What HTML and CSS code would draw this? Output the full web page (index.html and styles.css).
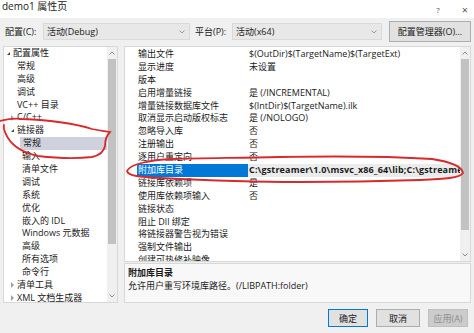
FILE: index.html
```html
<!DOCTYPE html>
<html lang="zh-CN">
  <head>
    <meta charset="UTF-8" />
    <meta name="viewport" content="width=device-width, initial-scale=1.0" />
    <title>demo1 属性页</title>
    <link rel="stylesheet" href="styles.css">
  </head>
  <body>
    <div class="dialog">
      <div class="titlebar">
        <span class="title">demo1 属性页</span>
        <span class="caption-btns">
          <span class="cap-help">?</span>
          <span class="cap-close">×</span>
        </span>
      </div>

      <div class="config-row">
        <span class="label label-config">配置(C):</span>
        <div class="combo combo-config">
          <span>活动(Debug)</span>
          <svg class="chev" width="6" height="4" viewBox="0 0 6 4"><path d="M0.5 0.5 L3 3 L5.5 0.5" fill="none" stroke="#9a9a9a" stroke-width="1"/></svg>
        </div>
        <span class="label label-platform">平台(P):</span>
        <div class="combo combo-platform">
          <span>活动(x64)</span>
          <svg class="chev" width="6" height="4" viewBox="0 0 6 4"><path d="M0.5 0.5 L3 3 L5.5 0.5" fill="none" stroke="#9a9a9a" stroke-width="1"/></svg>
        </div>
        <button class="btn btn-manager">配置管理器(O)...</button>
      </div>

      <div class="main">
        <!-- 左侧属性树 -->
        <div class="tree-panel">
          <div class="tree">
            <div class="tree-row lvl0"><span class="twist"><span class="tri-open"></span></span><span class="label">配置属性</span></div>
            <div class="tree-row lvl1"><span class="twist"></span><span class="label">常规</span></div>
            <div class="tree-row lvl1"><span class="twist"></span><span class="label">高级</span></div>
            <div class="tree-row lvl1"><span class="twist"></span><span class="label">调试</span></div>
            <div class="tree-row lvl1"><span class="twist"></span><span class="label">VC++ 目录</span></div>
            <div class="tree-row lvl1"><span class="twist"><span class="tri-closed"></span></span><span class="label">C/C++</span></div>
            <div class="tree-row lvl1"><span class="twist"><span class="tri-open"></span></span><span class="label">链接器</span></div>
            <div class="tree-row lvl2 selected"><span class="twist"></span><span class="label">常规</span></div>
            <div class="tree-row lvl2"><span class="twist"></span><span class="label">输入</span></div>
            <div class="tree-row lvl2"><span class="twist"></span><span class="label">清单文件</span></div>
            <div class="tree-row lvl2"><span class="twist"></span><span class="label">调试</span></div>
            <div class="tree-row lvl2"><span class="twist"></span><span class="label">系统</span></div>
            <div class="tree-row lvl2"><span class="twist"></span><span class="label">优化</span></div>
            <div class="tree-row lvl2"><span class="twist"></span><span class="label">嵌入的 IDL</span></div>
            <div class="tree-row lvl2"><span class="twist"></span><span class="label">Windows 元数据</span></div>
            <div class="tree-row lvl2"><span class="twist"></span><span class="label">高级</span></div>
            <div class="tree-row lvl2"><span class="twist"></span><span class="label">所有选项</span></div>
            <div class="tree-row lvl2"><span class="twist"></span><span class="label">命令行</span></div>
            <div class="tree-row lvl1"><span class="twist"><span class="tri-closed"></span></span><span class="label">清单工具</span></div>
            <div class="tree-row lvl1"><span class="twist"><span class="tri-closed"></span></span><span class="label">XML 文档生成器</span></div>
          </div>
          <div class="scrollbar scrollbar-tree">
            <svg class="sb-arrow" width="6" height="4" viewBox="0 0 6 4"><path d="M0.5 3.5 L3 1 L5.5 3.5" fill="none" stroke="#8a8a8a" stroke-width="1"/></svg>
            <div class="sb-track"><div class="sb-thumb thumb-tree"></div></div>
            <svg class="sb-arrow" width="6" height="4" viewBox="0 0 6 4"><path d="M0.5 0.5 L3 3 L5.5 0.5" fill="none" stroke="#8a8a8a" stroke-width="1"/></svg>
          </div>
        </div>

        <!-- 右侧属性表 -->
        <div class="right-panel">
          <div class="grid-panel">
            <div class="props">
              <div class="prop"><span class="name">输出文件</span><span class="value">$(OutDir)$(TargetName)$(TargetExt)</span></div>
              <div class="prop"><span class="name">显示进度</span><span class="value">未设置</span></div>
              <div class="prop"><span class="name">版本</span><span class="value"></span></div>
              <div class="prop"><span class="name">启用增量链接</span><span class="value">是 (/INCREMENTAL)</span></div>
              <div class="prop"><span class="name">增量链接数据库文件</span><span class="value">$(IntDir)$(TargetName).ilk</span></div>
              <div class="prop"><span class="name">取消显示启动版权标志</span><span class="value">是 (/NOLOGO)</span></div>
              <div class="prop"><span class="name">忽略导入库</span><span class="value">否</span></div>
              <div class="prop"><span class="name">注册输出</span><span class="value">否</span></div>
              <div class="prop"><span class="name">逐用户重定向</span><span class="value">否</span></div>
              <div class="prop active"><span class="name">附加库目录</span><span class="value">C:\gstreamer\1.0\msvc_x86_64\lib;C:\gstreamer\1.0\msvc_x86_64\lib\gstreamer-1.0</span></div>
              <div class="prop"><span class="name">链接库依赖项</span><span class="value">是</span></div>
              <div class="prop"><span class="name">使用库依赖项输入</span><span class="value">否</span></div>
              <div class="prop"><span class="name">链接状态</span><span class="value"></span></div>
              <div class="prop"><span class="name">阻止 Dll 绑定</span><span class="value"></span></div>
              <div class="prop"><span class="name">将链接器警告视为错误</span><span class="value"></span></div>
              <div class="prop"><span class="name">强制文件输出</span><span class="value"></span></div>
              <div class="prop"><span class="name">创建可热修补映像</span><span class="value"></span></div>
            </div>
            <div class="scrollbar scrollbar-grid">
              <svg class="sb-arrow" width="6" height="4" viewBox="0 0 6 4"><path d="M0.5 3.5 L3 1 L5.5 3.5" fill="none" stroke="#8a8a8a" stroke-width="1"/></svg>
              <div class="sb-track"><div class="sb-thumb thumb-grid"></div></div>
              <svg class="sb-arrow" width="6" height="4" viewBox="0 0 6 4"><path d="M0.5 0.5 L3 3 L5.5 0.5" fill="none" stroke="#8a8a8a" stroke-width="1"/></svg>
            </div>
          </div>
          <div class="desc">
            <div class="desc-title">附加库目录</div>
            <div class="desc-text">允许用户重写环境库路径。(/LIBPATH:folder)</div>
          </div>
        </div>
      </div>

      <div class="buttons">
        <button class="btn btn-ok">确定</button>
        <button class="btn btn-cancel">取消</button>
        <button class="btn btn-apply" disabled>应用(A)</button>
      </div>

      <!-- 红色手绘标注 -->
      <svg class="annot" width="474" height="333" viewBox="0 0 474 333">
        <path d="M0 121 C 8 119 14 118 22 119 C 45 120 70 122 92 129 C 100 131 106 131 110 132 C 106 136 105 142 105 146 C 104 151 101 155 92 157 C 75 159 55 158 38 156 C 24 153 13 146 8 138 C 5 133 3 129 4 125" fill="none" stroke="#d82a2c" stroke-width="1.8" stroke-linecap="round"/>
        <path d="M172 159 C 150 160 130 164 127 171 C 128 176 140 177 160 178 C 200 180 250 182 300 182 C 350 182 390 181 420 180 C 445 179 460 178 463 173 C 462 167 452 162 432 159 C 400 157 340 156 280 157 C 240 158 205 158 172 159" fill="none" stroke="#d82a2c" stroke-width="1.8" stroke-linecap="round"/>
      </svg>
    </div>
  </body>
</html>
```

FILE: styles.css
```css
* {
  margin: 0;
  padding: 0;
  box-sizing: border-box;
}

body {
  font-family: "Open Sans", "Noto Sans CJK SC", sans-serif;
  font-size: 9px;
  color: #1a1a1a;
  background: #f0f0f0;
}

.dialog {
  position: relative;
  width: 474px;
  height: 333px;
  overflow: hidden;
  background: #f0f0f0;
}

/* 标题栏 */
.titlebar {
  height: 18px;
  background: #fff;
  display: flex;
  justify-content: space-between;
}

.title {
  font-size: 10px;
  line-height: 13px;
  padding-left: 2px;
}

.caption-btns {
  display: flex;
  align-items: flex-end;
  color: #555;
}

.cap-help {
  font-size: 8px;
  line-height: 16px;
  margin-right: 22px;
}

.cap-close {
  font-size: 11px;
  line-height: 16px;
  margin-right: 6px;
}

/* 配置行 */
.config-row {
  display: flex;
  align-items: center;
  height: 23px;
  padding-top: 4px;
  padding-left: 5px;
}

.label-config {
  width: 38px;
}

.label-platform {
  width: 37px;
  margin-left: 5px;
}

.combo {
  height: 17px;
  background: #e8e8e8;
  border: 1px solid #d9d9d9;
  display: flex;
  align-items: center;
  justify-content: space-between;
  padding: 0 4px 0 3px;
}

.combo-config {
  width: 147px;
}

.combo-platform {
  width: 150px;
}

.btn {
  font-family: inherit;
  font-size: 9px;
  color: #1a1a1a;
  background: #e1e1e1;
  border: 1px solid #adadad;
  height: 18px;
}

.btn-manager {
  width: 82px;
  height: 21px;
  margin-left: 7px;
}

/* 主体 */
.main {
  display: flex;
  margin-top: 5px;
  height: 257px;
}

.tree-panel {
  width: 115px;
  margin-left: 3px;
  border: 1px solid #d8d8d8;
  background: #fff;
  display: flex;
  overflow: hidden;
}

.tree {
  flex: 1;
  overflow: hidden;
}

.tree-row {
  display: flex;
  height: 12.9px;
  line-height: 12.9px;
  white-space: nowrap;
}

.tree-row.lvl0 {
  padding-left: 1px;
}

.tree-row.lvl1 {
  padding-left: 5px;
}

.tree-row.lvl2 {
  padding-left: 10px;
}

.twist {
  width: 6px;
  flex: none;
  display: flex;
  align-items: center;
  justify-content: center;
}

.tri-open {
  width: 0;
  height: 0;
  border-left: 3px solid transparent;
  border-bottom: 3px solid #444;
}

.tri-closed {
  width: 0;
  height: 0;
  border-top: 3px solid transparent;
  border-bottom: 3px solid transparent;
  border-left: 3px solid #a0a0a0;
}

.tree-row .label {
  padding-left: 2px;
}

.tree-row.selected .label {
  flex: 1;
  padding-left: 3px;
  background: #cfd2dc;
}

.scrollbar {
  width: 10px;
  flex: none;
  background: #f0f0f0;
  display: flex;
  flex-direction: column;
  align-items: center;
  padding: 4px 0;
}

.sb-arrow {
  flex: none;
}

.sb-track {
  flex: 1;
  width: 100%;
  padding: 0 1px;
}

.sb-thumb {
  background: #c2c2c2;
  width: 100%;
}

.thumb-tree {
  margin-top: 4px;
  height: 185px;
}

.thumb-grid {
  margin-top: 4px;
  height: 171px;
}

.right-panel {
  width: 347px;
  margin-left: 6px;
  display: flex;
  flex-direction: column;
}

.grid-panel {
  height: 216px;
  border: 1px solid #d8d8d8;
  background: #fff;
  display: flex;
  overflow: hidden;
}

.props {
  flex: 1;
  padding-left: 12px;
  padding-top: 1px;
  overflow: hidden;
}

.prop {
  display: flex;
  height: 12.9px;
  line-height: 12.9px;
  white-space: nowrap;
}

.prop .name {
  width: 111px;
  flex: none;
  padding-left: 1px;
}

.prop .value {
  flex: 1;
  padding-left: 1px;
  overflow: hidden;
}

.prop.active .name {
  background: #0078d7;
  color: #fff;
}

.prop.active .value {
  background: #ebebeb;
  font-weight: bold;
  letter-spacing: 0.15px;
}

.desc {
  margin-top: 1px;
  height: 40px;
  border: 1px solid #d8d8d8;
  background: #f8f8f8;
  padding: 2px 3px;
  line-height: 13px;
}

.desc-title {
  font-weight: bold;
}

/* 底部按钮 */
.buttons {
  display: flex;
  justify-content: flex-end;
  gap: 8px;
  margin-top: 6px;
  padding-right: 6px;
}

.btn-ok {
  width: 40px;
  border-color: #0078d7;
}

.btn-cancel {
  width: 44px;
}

.btn-apply {
  width: 40px;
  background: #cccccc;
  border-color: #bfbfbf;
  color: #8c8c8c;
}

.annot {
  position: absolute;
  top: 0;
  left: 0;
  pointer-events: none;
}
```
